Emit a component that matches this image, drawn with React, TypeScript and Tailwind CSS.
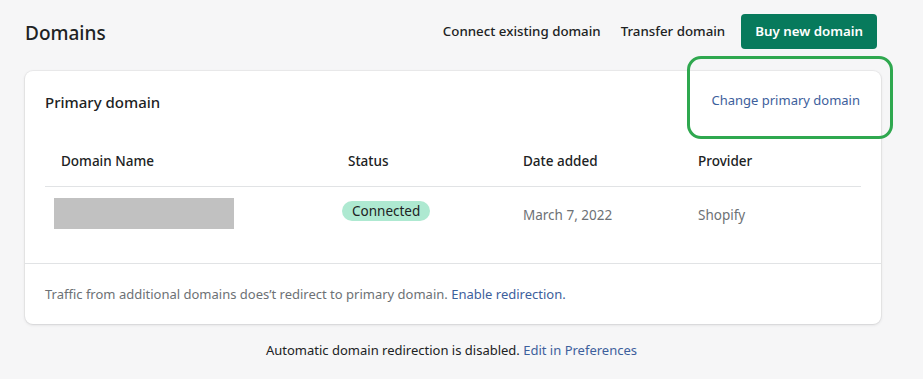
export default function App() {
  return (
    <div className="w-[923px] h-[379px] bg-[#f6f6f7] text-[#202223] overflow-hidden" style={{ fontFamily: '"Noto Sans", "Open Sans", sans-serif' }}>
      <div className="flex items-center justify-between pl-[25px] pr-[46px] pt-[14px]">
        <h1 className="text-[19px] font-medium mt-[4px]">Domains</h1>
        <div className="flex items-center text-[13.3px] font-medium">
          <span className="mr-[20px]">Connect existing domain</span>
          <span className="mr-[16px]">Transfer domain</span>
          <button className="h-[35px] px-[14px] rounded-[4px] bg-[#077a5c] text-white font-semibold">Buy new domain</button>
        </div>
      </div>

      <div className="mx-[25px] mt-[22px] w-[856px] bg-white rounded-[8px] shadow-[0_0_0_1px_rgba(63,63,68,0.05),0_1px_3px_rgba(63,63,68,0.15)]">
        <div className="flex items-center justify-between px-[20px] pt-[20px]">
          <h2 className="text-[15px] font-medium">Primary domain</h2>
          <div className="relative -mt-[4px]">
            <span className="block text-[13px] text-[#3d609c] mr-[1px]">Change primary domain</span>
            <div className="absolute -left-[24px] -right-[32px] -top-[35px] -bottom-[29px] border-[3px] border-[#2fa84f] rounded-[14px]" />
          </div>
        </div>

        <div className="mx-[20px] mt-[27px] text-[13.5px]">
          <div className="grid grid-cols-[287px_175px_175px_1fr] h-[46px] pb-[4px] items-center font-medium border-b border-[#e1e3e5]">
            <div className="pl-[16px]">Domain Name</div>
            <div className="pl-[16px]">Status</div>
            <div className="pl-[16px]">Date added</div>
            <div className="pl-[16px]">Provider</div>
          </div>
          <div className="grid grid-cols-[287px_175px_175px_1fr] h-[76px] items-start text-[#6d7175] leading-[20px]">
            <div className="pl-[9px] pt-[11px]">
              <div className="w-[180px] h-[31px] bg-[#c1c1c1]" />
            </div>
            <div className="pl-[10px] pt-[14px]">
              <span className="inline-block px-[10px] leading-[20px] rounded-full bg-[#aee9d1] text-[#202223]">Connected</span>
            </div>
            <div className="pl-[16px] pt-[18px]">March 7, 2022</div>
            <div className="pl-[16px] pt-[18px]">Shopify</div>
          </div>
        </div>

        <div className="border-t border-[#e1e3e5] px-[20px] pt-[3px] h-[61px] flex items-center text-[13px] text-[#6d7175]">
          <span>Traffic from additional domains does’t redirect to primary domain. <span className="text-[#3d609c]">Enable redirection.</span></span>
        </div>
      </div>

      <div className="text-center text-[13px] mt-[17px] pr-[20px]">
        Automatic domain redirection is disabled. <span className="text-[#3d609c]">Edit in Preferences</span>
      </div>
    </div>
  );
}
